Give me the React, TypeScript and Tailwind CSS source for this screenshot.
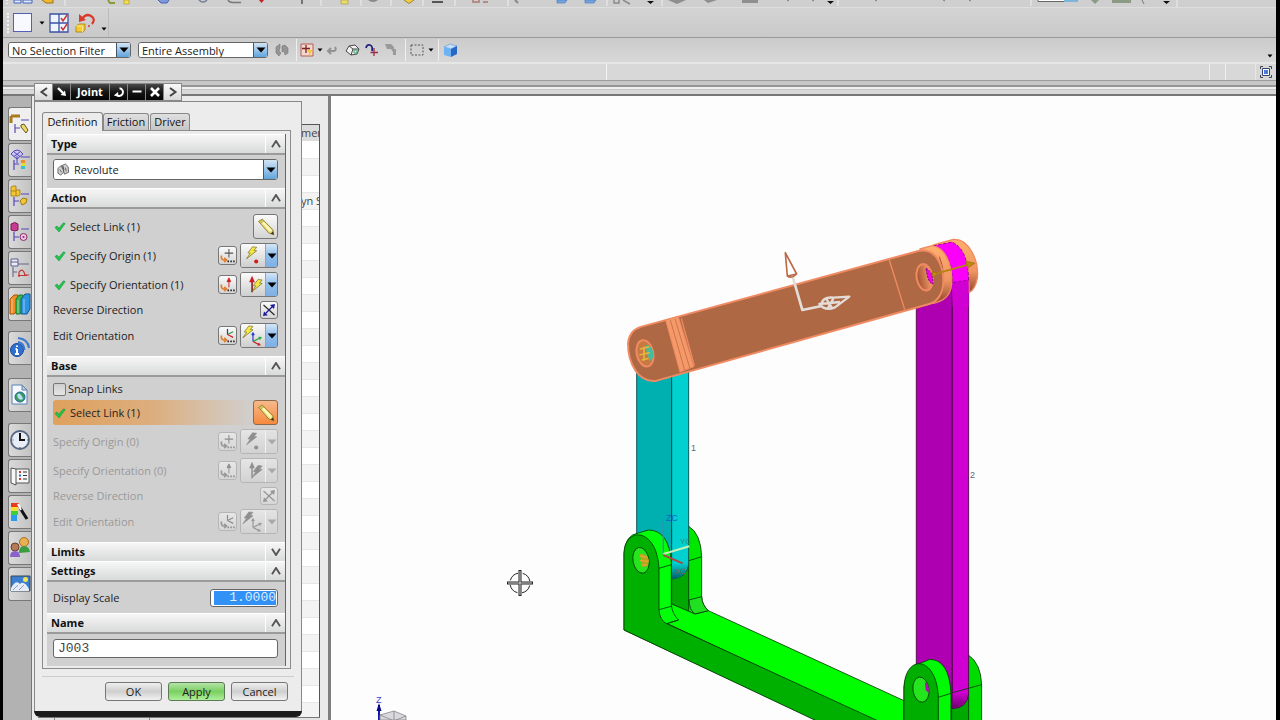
import React from "react";

type Kids = { children?: React.ReactNode };

/* ---------- small glyphs ---------- */

const Check = () => (
  <svg viewBox="0 0 12 12" className="h-3 w-3 shrink-0">
    <path d="M1 6.5 L3 5 L4.8 7.2 L9.5 1.8 L11.2 2.6 L5 11 Z" fill="#1fc44c" stroke="#169a3a" strokeWidth=".6" />
  </svg>
);

const Down = ({ className = "" }: { className?: string }) => (
  <svg viewBox="0 0 10 6" className={"h-1.5 w-2.5 " + className}>
    <path d="M0.5 0.5 H9.5 L5 5.5 Z" fill="currentColor" />
  </svg>
);

const Pencil = () => (
  <svg viewBox="0 0 24 24" className="h-[22px] w-[22px]">
    <path d="M4 6 L8 3.500 L19.500 15 L20.500 20.500 L15 18.500 Z" fill="#f0e37c" stroke="#8a7a2a" strokeWidth="1" />
    <path d="M7 5 L17.5 16.500" stroke="#fffbd0" strokeWidth="1.8" />
    <path d="M17 19.200 L20.500 20.500 L19.600 16.500 Z" fill="#443c18" />
    <path d="M4 6 L8 3.500 L9.800 5.300 L6 8.200 Z" fill="#d9c95c" stroke="#8a7a2a" strokeWidth=".6" />
  </svg>
);

const Bolt = ({ x = 0, y = 0, off }: { x?: number; y?: number; off?: boolean }) => (
  <path
    transform={`translate(${x} ${y})`}
    d="M6.5 0 L11 0.5 L8 4 L11 4.3 L0 13 L4 7 L1.5 6.5 Z"
    fill={off ? "#8f8f8f" : "#f4e944"}
    stroke={off ? "#8f8f8f" : "#6b641c"}
    strokeWidth=".7"
  />
);

type Kind = "origin" | "orient" | "axes";

const DialogIcon = ({ kind, off }: { kind: Kind; off?: boolean }) => {
  const red = off ? "#8d8d8d" : "#cf2020";
  const org = off ? "#9a9a9a" : "#e08232";
  const ink = off ? "#8d8d8d" : "#222";
  const green = off ? "#8d8d8d" : "#2c9c3c";
  const blue = off ? "#8d8d8d" : "#2636b8";
  return (
    <svg viewBox="0 0 18 18" className="h-[17px] w-[17px]">
      <path d="M2.5 9 V11.5 Q3 14 7 13.8 M5.5 11.5 L8 13.8 L5.5 16" fill="none" stroke={org} strokeWidth="1.8" />
      <path d="M9 15.2 h1.6 M12 15.2 h1.6 M15 15.2 h1.6" stroke={ink} strokeWidth="1.8" />
      {kind === "origin" && <path d="M10.5 2 V11 M6 6.5 H15" stroke={off ? "#8d8d8d" : "#555"} strokeWidth="1.1" fill="none" />}
      {kind === "orient" && <path d="M10.5 12 V5 M8.6 6 L10.5 2 L12.4 6 Z" stroke={red} fill={red} strokeWidth="1" />}
      {kind === "axes" && (
        <g fill="none" strokeWidth="1.3">
          <path d="M9 8 V2" stroke={blue} />
          <path d="M9 8 L15 5" stroke={green} />
          <path d="M9 8 L15 11" stroke={red} />
        </g>
      )}
    </svg>
  );
};

const InferIcon = ({ kind, off }: { kind: Kind; off?: boolean }) => {
  const red = off ? "#8f8f8f" : "#cf1c1c";
  return (
    <svg viewBox="0 0 24 24" className="h-[22px] w-[22px]">
      {kind === "origin" && (
        <>
          <Bolt x={5} y={2} off={off} />
          <circle cx="15.5" cy="18" r="2.2" fill={red} />
        </>
      )}
      {kind === "orient" && (
        <>
          <path d="M11 20 V8" stroke={off ? "#8f8f8f" : "#7a1010"} strokeWidth="1.6" />
          <path d="M7.8 9 L11 2 L14 9 Z" fill={red} />
          <Bolt x={11} y={6} off={off} />
        </>
      )}
      {kind === "axes" && (
        <>
          <Bolt x={1} y={1} off={off} />
          <g fill="none" strokeWidth="1.3">
            <path d="M12 18 V9 M10.6 11 L12 8.6 L13.4 11" stroke={off ? "#999" : "#2b3fd0"} />
            <path d="M12 18 L20 14 M18 13.6 L20.6 13.7 L19.2 16" stroke={off ? "#999" : "#22a83a"} />
            <path d="M12 18 L19 21.5 M17 22 L19.5 21.7 L18 19.7" stroke={off ? "#999" : "#c92222"} />
          </g>
        </>
      )}
    </svg>
  );
};

const ReverseIcon = ({ off }: { off?: boolean }) => {
  const c = off ? "#949494" : "#1c1c9c";
  return (
    <svg viewBox="0 0 16 16" className="h-4 w-4">
      <path d="M2.5 3 L13.5 13" stroke={off ? "#949494" : "#222"} strokeWidth="1.1" />
      <path d="M3.5 12.5 L12.5 3.5" stroke={c} strokeWidth="1.2" />
      <path d="M14 2 L13 7 L9 3 Z M2 14 L3 9.5 L6.8 13.2 Z" fill={c} />
    </svg>
  );
};

/* ---------- dialog pieces ---------- */

const btn = "flex items-center justify-center rounded-[3px] border bg-gradient-to-b ";
const btnOn = "border-[#777] from-[#fafafa] to-[#d4d4d4] ";
const btnOff = "border-[#b5b5b5] from-[#e6e6e6] to-[#d6d6d6] ";

const Section = ({ title, closed, children, body = "" }: Kids & { title: string; closed?: boolean; body?: string }) => (
  <section>
    <h2 className="flex h-[19px] items-stretch border-t border-white bg-gradient-to-b from-[#f6f6f6] to-[#d9dada] font-bold">
      <span className="flex-1 pl-1 leading-[18px]">{title}</span>
      <button aria-label={"Toggle " + title} className="flex w-5 items-center justify-center border-l border-white">
        <svg viewBox="0 0 10 8" className="h-2 w-2.5">
          <path d={closed ? "M1 0.8 L5 7 L9 0.8" : "M1 7.2 L5 1 L9 7.2"} fill="none" stroke="#555" strokeWidth="1.9" />
        </svg>
      </button>
    </h2>
    {children && <div className={"border-t-2 border-[#9b9b9b] bg-[#d0d0d0] pl-1.5 pr-[7px] " + body}>{children}</div>}
  </section>
);

const Row = ({ label, check, off, short, children }: Kids & { label: string; check?: boolean; off?: boolean; short?: boolean }) => (
  <div className={"flex items-center " + (short ? "h-[22px] " : "h-[29px] ") + (off ? "text-[#999]" : "text-[#222]")}>
    {check && (
      <span className="mr-1 ml-px">
        <Check />
      </span>
    )}
    <span className="flex-1">{label}</span>
    {children}
  </div>
);

const Tools = ({ kind, off }: { kind: Kind; off?: boolean }) => (
  <div className="flex items-center gap-[3px]">
    <button aria-label="Open constructor" disabled={off} className={btn + "h-[19px] w-[19px] " + (off ? btnOff : btnOn)}>
      <DialogIcon kind={kind} off={off} />
    </button>
    <div className={"flex h-[25px] w-[38px] overflow-hidden rounded-[3px] border " + (off ? "border-[#b5b5b5]" : "border-[#777]")}>
      <button
        aria-label="Inferred"
        disabled={off}
        className={"flex flex-1 items-center justify-center bg-gradient-to-b " + (off ? "from-[#e6e6e6] to-[#d2d2d2]" : "from-[#fafafa] to-[#cfcfcf]")}
      >
        <InferIcon kind={kind} off={off} />
      </button>
      <button
        aria-label="More options"
        disabled={off}
        className={
          "flex w-3 items-center justify-center border-l bg-gradient-to-b " +
          (off ? "border-[#f2f2f2] from-[#e3e3e3] to-[#d2d2d2] text-[#aaa]" : "border-[#8aa] from-[#d5e6f7] via-[#8fbdeb] to-[#7fb0e4] text-black")
        }
      >
        <Down className="h-1 w-2" />
      </button>
    </div>
  </div>
);

const Combo = ({ label, value, className, pad = "pl-1" }: { label: string; value: string; className: string; pad?: string }) => (
  <label className={"relative flex overflow-hidden rounded-[3px] border border-[#666] bg-white " + className}>
    <select aria-label={label} className={"w-full appearance-none bg-white text-[#222] outline-none " + pad}>
      <option>{value}</option>
    </select>
    <span className="pointer-events-none absolute inset-y-0 right-0 flex w-3.5 items-center justify-center border-l border-[#456] bg-gradient-to-b from-[#d3e5f5] to-[#5fa4dc] text-black">
      <Down />
    </span>
  </label>
);

const TitleKey = ({ label, light, children }: Kids & { label: string; light?: boolean }) => (
  <button
    aria-label={label}
    className={
      "flex w-[17px] items-center justify-center bg-gradient-to-b " +
      (light ? "from-[#fafafa] to-[#d8d8d8] text-[#444]" : "from-[#4a4a4a] via-[#151515] to-[#050505] text-white")
    }
  >
    <svg viewBox="0 0 12 12" className="h-3 w-3" fill="none" stroke="currentColor" strokeWidth="2">
      {children}
    </svg>
  </button>
);

const JointDialog = () => (
  <div role="dialog" aria-label="Joint" className="absolute left-[31px] top-[83px] w-[268px]">
    <div className="flex h-[18px] w-[148px] gap-px border border-[#888] bg-[#888]">
      <TitleKey label="Previous" light>
        <path d="M9 2 L3.5 6 L9 10" />
      </TitleKey>
      <TitleKey label="Pin">
        <path d="M2 2 L7 7" strokeWidth="2.4" />
        <path d="M10 10 L4.5 9 L9 4.5 Z" fill="currentColor" stroke="none" />
      </TitleKey>
      <h1 className="flex-1 bg-gradient-to-b from-[#4a4a4a] via-[#151515] to-[#050505] text-center font-bold leading-[15px] text-white">Joint</h1>
      <TitleKey label="Reset">
        <path d="M6.500 2.300 A3.900 3.900 0 1 1 3 8.500" />
        <path d="M0.800 9.500 L5 6 L5.5 10.5 Z" fill="currentColor" stroke="none" />
      </TitleKey>
      <TitleKey label="Minimize">
        <path d="M1.5 5.5 H10.5" />
      </TitleKey>
      <TitleKey label="Close">
        <path d="M2 2 L10 10 M10 2 L2 10" strokeWidth="2.6" />
      </TitleKey>
      <TitleKey label="Next" light>
        <path d="M3 2 L8.5 6 L3 10" />
      </TitleKey>
    </div>
    <div className="rounded-b-md border-b-[6px] border-[#1a1a1a] bg-[#1a1a1a]">
      <div className="border border-b-0 border-[#888] bg-[#ececec] px-[7px] pb-2.5 pt-2.5">
        <div role="tablist" className="relative z-10 flex items-end">
          <button role="tab" aria-selected="true" className="-mb-px h-[19px] w-[61px] rounded-t-[3px] border border-b-0 border-[#888] bg-[#ececec]">
            Definition
          </button>
          <button role="tab" className="h-[17px] w-[46px] rounded-t-[3px] border border-b-0 border-[#888] bg-gradient-to-b from-[#e0e0e0] to-[#c6c6c6] leading-4">
            Friction
          </button>
          <button role="tab" className="ml-px h-[17px] w-10 rounded-t-[3px] border border-b-0 border-[#888] bg-gradient-to-b from-[#e0e0e0] to-[#c6c6c6] leading-4">
            Driver
          </button>
        </div>
        <div className="mr-[3px] border border-[#8c8c8c] px-1 pb-0.5 pt-[3px]">
          <div className="border-r border-[#666]">
            <Section title="Type" body="pt-1 h-[35px]">
              <div className="relative">
                <Combo label="Joint type" value="Revolute" className="h-[21px]" pad="pl-5" />
                <svg viewBox="0 0 14 14" className="pointer-events-none absolute left-1 top-1 h-[13px] w-[13px]" stroke="#555" strokeWidth=".9" fill="#cfcfcf">
                  <path d="M1 6 L4 3 L7 4 V10 L4 13 L1 11 Z M5 3 L9 1 L12 4 L12.5 10 L8 12 L7 8 Z" />
                  <path d="M3 7 L5 10 M9 5 L10 9 M5 5 L8 7" />
                </svg>
              </div>
            </Section>
            <Section title="Action" body="h-[149px] pt-[3px]">
              <Row label="Select Link (1)" check>
                <button aria-label="Select link" className={btn + btnOn + "h-[25px] w-[25px]"}>
                  <Pencil />
                </button>
              </Row>
              <Row label="Specify Origin (1)" check>
                <Tools kind="origin" />
              </Row>
              <Row label="Specify Orientation (1)" check>
                <Tools kind="orient" />
              </Row>
              <Row label="Reverse Direction" short>
                <button aria-label="Reverse direction" className={btn + btnOn + "h-[18px] w-[18px]"}>
                  <ReverseIcon />
                </button>
              </Row>
              <Row label="Edit Orientation">
                <Tools kind="axes" />
              </Row>
            </Section>
            <Section title="Base" body="h-[167px] pt-px">
              <label className="flex h-[22px] items-center gap-0.5 text-[#222]">
                <input type="checkbox" className="h-[13px] w-[13px] appearance-none rounded-[2px] border border-[#777] bg-gradient-to-b from-[#cfcfcf] to-[#e6e6e6]" />
                Snap Links
              </label>
              <div className="mb-0.5 flex h-[25px] items-center rounded-[3px] bg-gradient-to-r from-[#dfa05c] via-[#dcae7e] via-45% to-[#d0d0d0] to-90% text-[#222]">
                <span className="ml-px mr-1">
                  <Check />
                </span>
                <span className="flex-1">Select Link (1)</span>
                <button aria-label="Select base link" className={btn + "h-[25px] w-[25px] border-[#8a6a50] from-[#f7b98a] to-[#f6893c]"}>
                  <Pencil />
                </button>
              </div>
              <Row label="Specify Origin (0)" off>
                <Tools kind="origin" off />
              </Row>
              <Row label="Specify Orientation (0)" off>
                <Tools kind="orient" off />
              </Row>
              <Row label="Reverse Direction" short off>
                <button aria-label="Reverse base direction" disabled className={btn + btnOff + "h-[18px] w-[18px]"}>
                  <ReverseIcon off />
                </button>
              </Row>
              <Row label="Edit Orientation" off>
                <Tools kind="axes" off />
              </Row>
            </Section>
            <Section title="Limits" closed />
            <Section title="Settings" body="h-[33px] flex items-center">
              <label className="flex flex-1 items-center justify-between text-[#222]">
                Display Scale
                <span className="flex h-[18px] w-[68px] rounded-[3px] border border-[#666] bg-white py-px pl-[3px] pr-px">
                  <input defaultValue="1.0000" className='w-full bg-[#3191f4] text-right font-["Liberation_Mono"] text-[13px] leading-[14px] text-[#dcecff] outline-none' />
                </span>
              </label>
            </Section>
            <Section title="Name" body="h-[34px] pt-[5px]">
              <input aria-label="Name" defaultValue="J003" className='h-[19px] w-full rounded-[3px] border border-[#666] bg-white pl-1 font-["Liberation_Mono"] text-[13px] text-[#444] outline-none' />
            </Section>
          </div>
        </div>
        <div className="mt-[7px] flex justify-end gap-1.5 border-t border-[#ccc] pr-1.5 pt-[5px] leading-4 text-[#222]">
          <button className="h-[19px] w-[57px] rounded-[3px] border border-[#777] bg-gradient-to-b from-[#efefef] via-[#cfcfcf] to-[#f2f2f2]">OK</button>
          <button className="h-[19px] w-[57px] rounded-[3px] border border-[#5c7a55] bg-gradient-to-b from-[#b5e3a6] via-[#79cf60] to-[#aef09a]">Apply</button>
          <button className="h-[19px] w-[57px] rounded-[3px] border border-[#777] bg-gradient-to-b from-[#efefef] via-[#cfcfcf] to-[#f2f2f2]">Cancel</button>
        </div>
      </div>
    </div>
  </div>
);

/* ---------- resource bar ---------- */

const tabIcons: { name: string; gap: string; art: React.ReactNode }[] = [
  {
    name: "Assembly constraints", gap: "",
    art: (<><path d="M2 4 H11 M2 4 V11" stroke="#a87c1c" strokeWidth="3" /><path d="M12 8 H20 M6 12 V21 M6 16 H11" stroke="#5a4ab0" strokeWidth="1.2" /><path d="M12 13 L15 12 L19 18 L17 21 L12 15 Z" fill="#ecd870" stroke="#695617" /></>),
  },
  {
    name: "Simulation navigator", gap: "",
    art: (<><path d="M2 6 Q8 -2 14 6 L8 11 Z M5 4 L11 8.5 M11 4 L5 8.5 M8 8 V15" fill="#c8c8f2" stroke="#5547bb" /><path d="M12 9 H21 M5 12 V22 M5 16 H10" stroke="#5547bb" strokeWidth="1.2" /><path d="M12 12 h4 v3 h-4z" fill="#f08a2c" /><path d="M12 15 h4 v3 h-4z" fill="#dede38" /><path d="M12 18 h4 v3 h-4z" fill="#37c1c9" /></>),
  },
  {
    name: "Assembly navigator", gap: "",
    art: (<><path d="M2 3 L4 2 H7 V6 H11 V11 L9 12 H2 Z M2 7 H7 V12 M7 6 V7" fill="#f3c532" stroke="#9d7a12" strokeWidth=".8" /><path d="M12 10 H20 M5 13 V22 M5 17 H10" stroke="#5547bb" strokeWidth="1.2" /><path d="M11 17 L14 14 L18 15 L17 19 L13 21 Z" fill="#f3c532" stroke="#9d7a12" /></>),
  },
  {
    name: "Part navigator", gap: "",
    art: (<><path d="M2 4 Q6 1 9 4 V10 Q6 12 2 10 Z" fill="#c63c92" stroke="#7c1d58" /><path d="M12 9 H20 M5 12 V21 M5 17 H10" stroke="#5547bb" strokeWidth="1.2" /><circle cx="14.500" cy="17" r="3.500" fill="#e8c8de" stroke="#8c2c6c" /><circle cx="14.500" cy="17" r="1" fill="#8c2c6c" /></>),
  },
  {
    name: "Motion navigator", gap: "",
    art: (<><path d="M2 3 h7 v7 h-7z M2 6 h7" fill="#ededf7" stroke="#5c5c8c" /><path d="M9 8 H20 M4 11 V21 M4 16 H8" stroke="#66668c" strokeWidth="1.1" /><path d="M10 21 V16 Q14 11 16 19 H20 M9 19.500 H18" stroke="#c23434" strokeWidth="1.2" /></>),
  },
  {
    name: "Reuse library", gap: "",
    art: (<><path d="M1 7 L5 3 H9 V18 L5 22 H1 Z" fill="#f28c24" stroke="#a8540e" /><path d="M7 7 L10 3 H14 V18 L11 22 H7 Z" fill="#37b54c" stroke="#1e7a30" /><path d="M12 7 L16 2 H21 V17 L18 22 H12 Z" fill="#2d93e0" stroke="#17588f" /><path d="M3 7 V21 M9 8 V21 M15 7 V21" stroke="#fff8" /></>),
  },
  {
    name: "HD3D tools", gap: "mt-2",
    art: (<><circle cx="8" cy="14" r="6.500" fill="#2e6fd0" stroke="#194a98" /><path d="M8 13 V18 M6 18 H10 M6.500 13 H8 M8 9.500 V11" stroke="#fff" strokeWidth="2" /><path d="M9 6 Q15 7 15.500 14 M9 2 Q19 3 20 12" stroke="#3a78d0" strokeWidth="2" /></>),
  },
  {
    name: "Web browser", gap: "mt-[11px]",
    art: (<><path d="M3 2 H13 L18 7 V21 H3 Z M13 2 V7 H18" fill="#f5f9ff" stroke="#5682b4" /><circle cx="11" cy="14" r="5" fill="#3c9c60" stroke="#26689c" /><path d="M8 12 Q10 9 12 12 T14 16 Q11 18 9 15 Z" fill="#b8dfee" /></>),
  },
  {
    name: "History", gap: "mt-[9px]",
    art: (<><circle cx="11" cy="12" r="9" fill="#e6edf7" stroke="#56677f" strokeWidth="1.800" /><path d="M11 5 V12 H16" stroke="#111" strokeWidth="2" /><path d="M3.500 12 h1 M11 19 v1 M18 12 h1" stroke="#444" /></>),
  },
  {
    name: "Process studio", gap: "",
    art: (<><path d="M2 4 L7 5 V21 L2 19 Z M7 5 H20 V19 H7" fill="#f7f7f7" stroke="#555" /><path d="M10 8 h2 M10 15 h2" stroke="#d33" strokeWidth="2" /><path d="M10 11.500 h2" stroke="#27a" strokeWidth="2" /><path d="M14 8 h4 M14 11.500 h4 M14 15 h4" stroke="#333" strokeWidth="1.200" /></>),
  },
  {
    name: "Visual style", gap: "",
    art: (<><path d="M2 3 h8 v5 h-8z" fill="#e63b1f" /><path d="M2 7 h7 v4 h-7z" fill="#f6df2a" /><path d="M2 11 h7 v4 h-7z" fill="#3fcf3e" /><path d="M2 15 h6 v6 h-6z" fill="#2a9df0" /><path d="M11 8 L18 19" stroke="#111" strokeWidth="3" /><path d="M9 4 L12 10" stroke="#fff" strokeWidth="2" /></>),
  },
  {
    name: "Roles", gap: "",
    art: (<><circle cx="15" cy="6" r="4.500" fill="#e8b04e" stroke="#a86e1e" /><path d="M10 17 Q10 10 15 10 Q20 10 21 16 Z" fill="#3c9c40" /><circle cx="6" cy="11" r="4" fill="#b77a58" stroke="#6c3f36" /><path d="M1 21 Q1 15 6 15 Q11 15 11 21 Z" fill="#8a62cc" /></>),
  },
  {
    name: "Scene", gap: "",
    art: (<><path d="M2 4 H21 V19 H2 Z" fill="#3a7fd0" stroke="#34465c" /><circle cx="16.500" cy="7.500" r="2.500" fill="#f7e24c" /><path d="M2 16 Q7 7 11 12 Q15 8 20 17 V19 H2 Z" fill="#e6ecf5" /><path d="M4 18 L9 13 M10 18 L15 13" stroke="#8ba0bd" /></>),
  },
];

const ResourceBar = () => (
  <nav className="flex w-[29px] shrink-0 flex-col items-end border-r border-[#777] bg-[#b2b2b2] pt-[11px]">
    {tabIcons.map((t, i) => (
      <button
        key={t.name}
        aria-label={t.name}
        className={
          "mb-0.5 flex h-[34px] w-[23px] shrink-0 items-center justify-center rounded-l-[3px] border border-r-0 border-[#777] " +
          (i === 0 ? "bg-[#efefef] " : "bg-gradient-to-r from-[#dadada] to-[#c3c3c3] ") +
          t.gap
        }
      >
        <svg viewBox="0 0 22 24" className="h-6 w-[22px]" fill="none" stroke="none">
          {t.art}
        </svg>
      </button>
    ))}
  </nav>
);

/* ---------- top toolbars ---------- */

const Drop = () => (
  <svg viewBox="0 0 6 4" className="h-1 w-1.5">
    <path d="M0.5 0.5 H5.500 L3 3.500 Z" fill="#000" />
  </svg>
);

const Grip = () => <span className="h-5 border-l-2 border-dotted border-[#f2f2f2]" />;
const Divider = () => <span className="h-[22px] border-l border-[#efefef]" />;

const TopIcons = () => (
  <svg viewBox="3 0 1180 8" className="h-2 w-[1180px]" fill="none">
    <path d="M7 0 V5" stroke="#eee" strokeWidth="2" strokeDasharray="1 2" />
    <path d="M14 0 H21 V3 H14 Z M23 0 H32 V3 H23 Z" fill="#dce9fb" stroke="#4763bb" />
    <path d="M42 0 L46 3 L53 3 V0" fill="#efb82e" stroke="#98701c" />
    <path d="M108 0 L110 3 H115" stroke="#8b9b2f" strokeWidth="2" />
    <path d="M124 0 H129 V4 H124 Z" fill="#f3e24f" stroke="#a5922c" strokeWidth=".6" />
    <path d="M158 0 L161 3 H167 L169 0" fill="#7d97da" stroke="#4764b4" />
    <path d="M199 0 Q203 4 207 0" stroke="#777d96" strokeWidth="1.500" />
    <path d="M228 0 Q229 2.500 233 2.500 H241" stroke="#777" strokeWidth="1.500" />
    <path d="M259 0 H264 L261.500 3 Z" fill="#c52222" />
    <path d="M302 0 V4" stroke="#555" strokeWidth="1.500" />
    <path d="M341 0 H348 V4 H341 Z" fill="#e8dc6c" stroke="#a5922c" strokeWidth=".6" />
    <path d="M368 0 Q373 4 378 0" fill="#888" />
    <path d="M404 0 L409 3.500 L414 0" fill="#edcf49" stroke="#a5822c" />
    <path d="M432 2 H443" stroke="#555" strokeWidth="2" />
    <path d="M473 0 V2 H479 V0 M483 2 H488" stroke="#b58d86" strokeWidth="2" />
    <path d="M515 0 L518 3" stroke="#888" strokeWidth="2" />
    <path d="M557 0 H567 L565 3 H557 Z M585 0 H596 L594 3 H585 Z" fill="#77a4df" stroke="#4276b9" strokeWidth=".6" />
    <path d="M614 0 V3 H619 V0 M623 0 L630 4" stroke="#8a8a8a" strokeWidth="1.500" />
    <path d="M647 1 H654 L650.500 4 Z M827 1 H834 L830.500 4 Z M1163 1 H1170 L1166.500 4 Z" fill="#111" />
    <path d="M668 0 H686 L677 4 Z M704 0 H717 L708 3 Z M742 0 H758 V3 H742 Z" fill="#8f8f8f" />
    <path d="M787 0 L789 1 M812 0 L814 1 M875 0 L877 1 M943 0 L945 1 M969 0 L971 1" stroke="#777" />
    <path d="M1038 0 V1.500 H1077 V0" fill="#fff" stroke="#666" />
    <path d="M1064 0 H1077 V2 H1064 Z" fill="#7db4dc" />
    <path d="M1091 0 H1099 L1095 4 Z M1112 0 H1131 V3 H1112 Z" fill="#8d9a86" />
    <path d="M1142 0 L1144 4" stroke="#777" />
    <path d="M65 0 V6 M321 0 V6 M361 0 V6 M391 0 V6 M423 0 V6 M455 0 V6 M508 0 V6 M607 0 V6 M662 0 V6 M838 0 V6 M1031 0 V6 M1177 0 V7" stroke="#eee" />
  </svg>
);

const Toolbars = () => (
  <header className="shrink-0">
    <div className="h-2 overflow-hidden border-b border-[#dedede] bg-[#cfcfcf]">
      <TopIcons />
    </div>
    <div className="flex h-[30px] items-center border-b border-[#999] bg-gradient-to-b from-[#d4d4d4] to-[#c9c9c9] pl-1">
      <div className="flex h-full items-center gap-1 border-r border-[#bcbcbc] pr-px">
        <Grip />
        <button aria-label="View layout" className="h-[19px] w-[19px] border border-[#5560b4] bg-[#f7f9ff]" />
        <span className="ml-[3px]">
          <Drop />
        </span>
        <button aria-label="Layout options">
          <svg viewBox="0 0 20 20" className="h-5 w-5">
            <path d="M1 1 H19 V19 H1 Z M10 1 V19 M1 10 H19" fill="#eef5ff" stroke="#3c52a4" strokeWidth="1.300" />
            <path d="M12 5 L14 8 L18 2 M12 14 L14 17 L18 11" fill="none" stroke="#c43535" strokeWidth="1.500" />
          </svg>
        </button>
        <button aria-label="Undo" className="ml-0.5">
          <svg viewBox="0 0 22 22" className="h-[22px] w-[22px]">
            <path d="M7 7 Q11 1 16 4 Q21 7 17 12" fill="none" stroke="#d83a2c" strokeWidth="2.200" />
            <path d="M4 2 L4 10 L11 8 Z" fill="#d83a2c" />
            <path d="M1 14 L4 12 H10 V18 L8 20 H1 Z" fill="#f4cb35" stroke="#a67e15" strokeWidth=".8" />
            <path d="M1 14 H7.500 V20" fill="none" stroke="#fbe78a" />
            <path d="M13 14 h2" stroke="#d83a2c" strokeWidth="1.500" />
          </svg>
        </button>
        <span className="mt-3">
          <Drop />
        </span>
      </div>
    </div>
    <div className="flex h-[26px] items-center gap-[7px] border-b-2 border-[#e6e6e6] bg-gradient-to-b from-[#cbcbcb] to-[#d7d7d7] pl-[5px] pr-[3px]">
      <Combo label="Selection filter" value="No Selection Filter" className="h-4 w-[123px]" pad="pl-[3px]" />
      <Combo label="Selection scope" value="Entire Assembly" className="h-4 w-[130px]" pad="pl-[3px]" />
      <svg viewBox="0 0 14 14" className="h-3.5 w-3.5" fill="#949494" stroke="#777" strokeWidth=".6">
        <path d="M1 4 L5 1 V5 L4 8 L6 10 L4 13 L1 10 Z M7 3 L10 2 L13 5 V10 L10 12 L9 8 L7 9 Z" />
      </svg>
      <div className="flex items-center gap-[3px]">
        <Divider />
        <button aria-label="Snap point">
          <svg viewBox="0 0 14 14" className="h-3.5 w-3.5">
            <path d="M1 1 H13 V13 H1 Z" fill="#f4d7cd" stroke="#b45c56" />
            <path d="M6 2 V10 M2 5.500 H10" stroke="#7d221c" strokeWidth="1.300" />
            <path d="M7 7 H13 L10.500 10 V13 L9 12 V10 Z" fill="#f1c83c" />
          </svg>
        </button>
        <Drop />
        <svg viewBox="0 0 12 12" className="h-3 w-3" fill="none" stroke="#929292" strokeWidth="2">
          <path d="M3 7 H8 Q11 6 9 3 M5 4 L2 7 L5 10" />
        </svg>
      </div>
      <div className="flex items-center gap-[5px]">
        <svg viewBox="0 0 15 14" className="h-3.5 w-[15px]" fill="#f3f3f3" stroke="#484848">
          <path d="M1 8 L4 3 L10 2 L14 6 L12 11 L6 12 Z M4 3 L8 6 L6 12 M8 6 L14 6" />
          <path d="M9 7 h3 v3 h-3z" stroke="#3a9c66" />
        </svg>
        <svg viewBox="0 0 14 14" className="h-3.5 w-3.5" fill="none">
          <path d="M1 5 Q2 1 5 2 T7 8" stroke="#20207c" strokeWidth="1.800" />
          <path d="M9 5 V13 M5.500 9.500 H13" stroke="#9c2c44" strokeWidth="1.300" />
        </svg>
        <svg viewBox="0 0 14 14" className="h-3.5 w-3.5" fill="#9a9a9a">
          <path d="M1 1 H7 L10 4 V6 H12 V12 H9 V9 L7 6 H3 Z" />
        </svg>
      </div>
      <div className="flex items-center gap-1">
        <Divider />
        <svg viewBox="0 0 14 12" className="h-3 w-3.5" fill="none" stroke="#555" strokeDasharray="2 1.500">
          <path d="M1 1 H13 V11 H1 Z" />
        </svg>
        <Drop />
        <Divider />
        <svg viewBox="0 0 15 15" className="h-[15px] w-[15px]">
          <path d="M1 4 L7 1 L14 3 L8 6 Z" fill="#c4e0fb" stroke="#4b86cc" strokeWidth=".5" />
          <path d="M1 4 L8 6 V14 L1 12 Z" fill="#6db2f3" />
          <path d="M8 6 L14 3 V11 L8 14 Z" fill="#2668c4" />
        </svg>
      </div>
      <span className="ml-auto mt-3">
        <Drop />
      </span>
    </div>
    <div className="flex h-[17px] items-center border-b border-[#9d9d9d] bg-[#d8d8d8]">
      <span className="h-full w-[604px] border-r border-[#f4f4f4]" />
      <span className="h-full flex-1" />
      <span className="h-full w-[17px] border-x border-[#f0f0f0]" />
      <span className="h-full w-[30px] border-r border-[#e6e6e6]" />
      <button aria-label="Full screen" className="mx-1">
        <svg viewBox="0 0 12 12" className="h-3 w-3" fill="none">
          <path d="M0.500 3 V0.500 H3 M9 0.500 H11.500 V3 M11.500 9 V11.500 H9 M3 11.500 H0.500 V9" stroke="#444" />
          <path d="M2.500 2.500 H9.500 V9.500 H2.500 Z" fill="#fff" stroke="#334a78" />
          <path d="M4 4 H8 V8 H4 Z" fill="#4b7ce0" />
        </svg>
      </button>
    </div>
    <div className="flex h-[15px] flex-col justify-between border-b-2 border-[#777] bg-[#c7c7c7]">
      <span className="mt-1 h-1 border-b-2 border-t-2 border-b-[#efefef] border-t-[#969696]" />
      <span className="h-1 bg-[#d9d9d9]" />
    </div>
  </header>
);

/* ---------- 3D scene ---------- */

const Scene = () => (
  <svg viewBox="331 96 945 624" preserveAspectRatio="xMinYMin slice" className="block h-full w-full" role="img" aria-label="Four-bar linkage model" strokeLinejoin="round">
    <defs>
      <linearGradient id="pin" x1="0" x2="1">
        <stop offset="0" stopColor="#9d4f30" />
        <stop offset="1" stopColor="#ffa56f" />
      </linearGradient>
      <linearGradient id="rim" x1="0" y1="0" x2="0" y2="1">
        <stop offset="0" stopColor="#ffb06c" />
        <stop offset=".6" stopColor="#f09562" />
        <stop offset="1" stopColor="#90492c" />
      </linearGradient>
      <linearGradient id="end" x1="0" y1="0" x2="0" y2="1">
        <stop offset="0" stopColor="#00cfd0" />
        <stop offset="1" stopColor="#005e66" />
      </linearGradient>
      <linearGradient id="mend" x1="0" y1="0" x2="0" y2="1">
        <stop offset="0" stopColor="#cf00cf" />
        <stop offset="1" stopColor="#6e006e" />
      </linearGradient>
    </defs>

    <g transform="translate(600 500) scale(.3333)" stroke="#063906" strokeWidth="2.500">
      <path d="M265 78 Q303 100 305 170 V290 Q306 315 325 332 L285 342 L215 315 V90 Z" fill="#00e700" />
      <path d="M1105 465 Q1143 490 1145 555 V670 H1050 V480 Z" fill="#00dc00" />
      <path d="M215 190 H266 V335 L215 312 Z" fill="#00a800" />
      <path d="M1055 580 H1106 V670 H1055 Z" fill="#00a900" />
      <path d="M110 -400 H215 V205 H110 Z" fill="#00afb0" stroke="#023c3e" />
      <path d="M215 -400 H266 V190 Q262 235 215 237 Z" fill="#00d0d0" stroke="#023c3e" />
      <path d="M216 190 H264 Q260 234 216 236 Z" fill="url(#end)" stroke="none" />
      <path d="M949 -640 L1057 -680 V600 H949 Z" fill="#ae00b0" stroke="#3e003e" />
      <path d="M1057 -660 H1106 V580 Q1102 625 1057 626 Z" fill="#d000d2" stroke="#3e003e" />
      <path d="M1058 578 H1104 Q1100 622 1058 625 Z" fill="url(#mend)" stroke="none" />
      <path d="M215 312 L285 342 L325 332 L912 602 V670 H840 L200 370 Z" fill="#00fe00" />
      <path d="M267 300 L305 290 Q306 315 325 332 L285 342 Q268 330 267 300" fill="#21e021" />
      <path d="M72 390 V160 Q75 105 115 99 L145 90 Q208 90 214 190 V315 Q218 345 236 360 L200 371 L840 670 H670 Z" fill="#00ff08" />
      <path d="M72 390 V160 C74 80 170 80 177 205 V330 Q180 362 200 371 L850 670 H665 Z" fill="#00b000" />
      <path d="M177 205 L214 194 M177 329 L214 319 M267 182 L305 170 M235 360 L200 371" fill="none" />
      <ellipse cx="123" cy="181" rx="24" ry="39" fill="#27e51c" transform="rotate(-10 123 181)" />
      <path d="M119 162 Q137 157 147 180 Q144 206 127 200 Z" fill="#b9a420" stroke="none" />
      <path d="M121 168 L143 172 M120 182 L146 184 M124 196 L142 194" fill="none" stroke="#e7a536" strokeWidth="4" />
      <path d="M912 670 V560 Q920 495 965 488 L990 478 Q1048 480 1053 580 V670 Z" fill="#00fa05" />
      <path d="M912 670 V565 C914 460 1010 465 1015 592 V670 Z" fill="#00ae00" />
      <path d="M1015 592 L1053 580 M1058 578 L1145 554" fill="none" />
      <ellipse cx="963" cy="569" rx="24" ry="38" fill="#24e51e" transform="rotate(-8 963 569)" />
      <path d="M975 546 Q990 555 986 580 L977 570 Z" fill="#b50ab5" stroke="none" />
      <g fill="none" strokeWidth="6">
        <path d="M190 165 V65" stroke="#6375c4" strokeWidth="4" />
        <path d="M190 162 L268 139" stroke="#c4f2b4" />
        <path d="M190 165 L248 190" stroke="#a84943" />
      </g>
    </g>

    <g transform="translate(600 220) scale(.3333)" stroke="#f08a62" strokeWidth="6">
      <path d="M1000 75 L1060 58 C1110 55 1137 125 1132 175 Q1125 210 1107 218 V190 L1050 100 Z" fill="url(#rim)" strokeWidth="4" />
      <path d="M1055 188 L1106 178 V260 H1058 Z" fill="#d000d2" stroke="none" />
      <path d="M1000 78 L1055 66 Q1104 85 1106 180 L1058 188 Q1055 95 1000 78 Z" fill="#fa00fa" stroke="#86008c" strokeWidth="2.500" strokeDasharray="10 5" />
      <path d="M960 87 L997 77 C1045 85 1062 155 1053 205 Q1045 240 1000 250 Z" fill="url(#rim)" strokeWidth="4" />
      <path d="M1018 110 Q1040 160 1024 235" fill="none" stroke="#9c5234" strokeWidth="3" />
      <path d="M125 320 L955 93 C1010 83 1032 140 1030 190 C1028 225 1010 247 985 253 L170 482 C115 490 84 430 84 370 Q88 330 125 320 Z" fill="#ae6944" />
      <path d="M197 300 L235 290 L281 440 L240 456 Z" fill="#f59968" strokeWidth="3" />
      <path d="M211 300 L254 450 M225 296 L270 446" fill="none" stroke="#c9744b" strokeWidth="3" />
      <path d="M244 295 L283 437 M868 120 L914 268" fill="none" strokeWidth="4" />
      <ellipse cx="135" cy="400" rx="25" ry="40" fill="#c87941" transform="rotate(-12 135 400)" />
      <path d="M138 375 Q160 375 161 410 L150 424 L140 400 Z" fill="#43bd9f" stroke="none" />
      <path d="M120 388 L148 380 M118 405 L150 398 M125 420 L146 415 M132 380 V422" fill="none" stroke="#e4b53e" strokeWidth="5" />
      <ellipse cx="974" cy="172" rx="24" ry="40" fill="url(#pin)" transform="rotate(-10 974 172)" />
      <path d="M978 145 Q1000 155 999 192 Q984 190 978 145" fill="#f400f4" stroke="#760076" strokeWidth="3" strokeDasharray="6 4" />
      <path d="M1000 163 L1105 134" stroke="#b88212" strokeWidth="5" fill="none" />
      <path d="M1098 124 L1124 130 L1103 144 Z M996 156 L1014 158 L1000 172 Z" fill="#c38b18" stroke="#a57410" strokeWidth="3" />
      <g fill="none" stroke="#e4dcd8" strokeWidth="8">
        <path d="M578 170 L607 270 L665 258" />
        <path d="M665 250 Q670 230 700 233 L748 230 L705 262 Q675 274 658 252 L720 246 M680 238 L695 262 M700 236 L684 264" strokeWidth="7" />
        <path d="M556 98 L562 168 L590 162 Z M562 168 Q575 177 590 162" stroke="#bd6a49" strokeWidth="5" />
      </g>
    </g>

    <g fontFamily="Liberation Sans, sans-serif" fontSize="9" fill="#666">
      <text x="691" y="451">1</text>
      <text x="970" y="478">2</text>
      <text x="666" y="521" fill="#1a62c4">ZC</text>
      <text x="680" y="544" fontSize="8" fill="#2f8f78">YC</text>
      <text x="675" y="574" fontSize="8" fill="#8b5d52">XC</text>
      <text x="376" y="703" fill="#3c3ccc">Z</text>
    </g>

    <g fill="none" stroke="#222">
      <circle cx="520" cy="583" r="10" strokeDasharray="11 4.700" strokeDashoffset="-2.500" />
      <path d="M520 570 V596 M507 583 H533" strokeWidth="3" />
      <path d="M520 571 V595 M508 583 H532" stroke="#ddd" />
    </g>
    <path d="M379 720 V705" stroke="#1212ac" strokeWidth="2" />
    <path d="M376.500 711 L379 703 L381.500 711 Z" fill="#08088c" />
    <path d="M380 715 L394 711 L406 716 V720 H380 Z M394 711 V720 M380 715 L392 720 M406 716 L396 720" fill="#d9d9dd" stroke="#85858c" strokeWidth=".8" />
  </svg>
);

/* ---------- page ---------- */

const Navigator = () => (
  <div className="flex w-[299px] shrink-0 flex-col border-r-[3px] border-[#808080] bg-[#ebebeb] pl-1.5 pr-2 pt-7">
    <div className="flex-1 overflow-hidden border-r border-t border-[#555] bg-white">
      <table className="w-full table-fixed whitespace-nowrap text-[#444]">
        <thead>
          <tr className="h-4 bg-[#dcdcdc]">
            <th className="overflow-hidden pl-[263px] text-left font-normal leading-4">ment</th>
          </tr>
        </thead>
        <tbody>
          {Array.from({ length: 34 }, (_, i) => (
            <tr key={i} className="h-[17px] border-b border-[#e6e6e6] odd:bg-white even:bg-[#f3f3f3]">
              <td className="overflow-hidden pl-[263px] leading-4">{i === 3 ? "yn S" : ""}</td>
            </tr>
          ))}
        </tbody>
      </table>
    </div>
    <div className="flex h-[3px] border-t border-[#777] bg-[#e2e2e2]">
      <span className="ml-4 w-24 border-x border-[#888]" />
    </div>
  </div>
);

export default function App() {
  return (
    <div className='relative flex h-screen flex-col overflow-hidden border-l-[3px] border-r-4 border-black bg-[#cfcfcf] font-["Open_Sans","Noto_Sans",sans-serif] text-[11px] leading-4 text-[#111]'>
      <Toolbars />
      <main className="flex min-h-0 flex-1">
        <ResourceBar />
        <Navigator />
        <div className="min-w-0 flex-1 bg-[#fdfdfd]">
          <Scene />
        </div>
      </main>
      <JointDialog />
    </div>
  );
}
